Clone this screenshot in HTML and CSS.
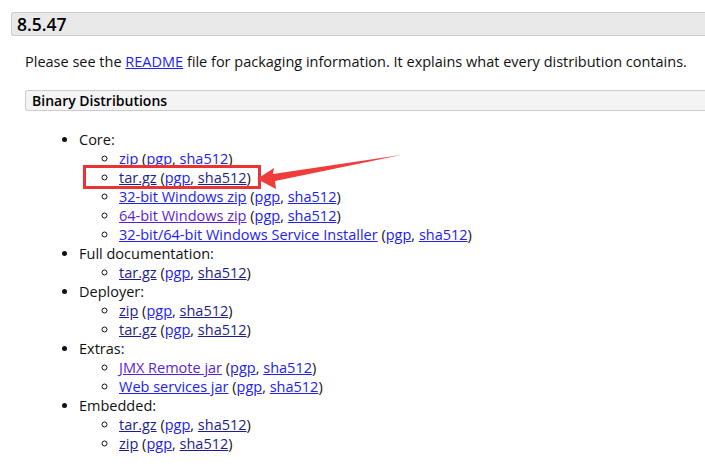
FILE: index.html
```html
<!DOCTYPE html>
<html>
<head>
<meta charset="utf-8">
<link rel="stylesheet" href="styles.css">
</head>
<body>
<div class="page">
  <h3 class="version">8.5.47</h3>
  <div class="section">
    <p class="intro">Please see the <a href="#" class="link">README</a> file for packaging information. It explains what every distribution contains.</p>
    <h4 class="subhead">Binary Distributions</h4>
    <ul class="dists">
      <li>Core:
        <ul class="files">
          <li><a class="link" href="#">zip</a> (<a class="link" href="#">pgp</a>, <a class="link" href="#">sha512</a>)</li>
          <li><a class="link dark" href="#">tar.gz</a> (<a class="link" href="#">pgp</a>, <a class="link dark" href="#">sha512</a>)</li>
          <li><a class="link" href="#">32-bit Windows zip</a> (<a class="link" href="#">pgp</a>, <a class="link" href="#">sha512</a>)</li>
          <li><a class="link purple" href="#">64-bit Windows zip</a> (<a class="link" href="#">pgp</a>, <a class="link" href="#">sha512</a>)</li>
          <li><a class="link" href="#">32-bit/64-bit Windows Service Installer</a> (<a class="link" href="#">pgp</a>, <a class="link" href="#">sha512</a>)</li>
        </ul>
      </li>
      <li>Full documentation:
        <ul class="files">
          <li><a class="link dark" href="#">tar.gz</a> (<a class="link" href="#">pgp</a>, <a class="link dark" href="#">sha512</a>)</li>
        </ul>
      </li>
      <li>Deployer:
        <ul class="files">
          <li><a class="link dark" href="#">zip</a> (<a class="link" href="#">pgp</a>, <a class="link dark" href="#">sha512</a>)</li>
          <li><a class="link dark" href="#">tar.gz</a> (<a class="link" href="#">pgp</a>, <a class="link dark" href="#">sha512</a>)</li>
        </ul>
      </li>
      <li>Extras:
        <ul class="files">
          <li><a class="link purple" href="#">JMX Remote jar</a> (<a class="link" href="#">pgp</a>, <a class="link" href="#">sha512</a>)</li>
          <li><a class="link" href="#">Web services jar</a> (<a class="link" href="#">pgp</a>, <a class="link" href="#">sha512</a>)</li>
        </ul>
      </li>
      <li>Embedded:
        <ul class="files">
          <li><a class="link dark" href="#">tar.gz</a> (<a class="link" href="#">pgp</a>, <a class="link dark" href="#">sha512</a>)</li>
          <li><a class="link dark" href="#">zip</a> (<a class="link" href="#">pgp</a>, <a class="link dark" href="#">sha512</a>)</li>
        </ul>
      </li>
    </ul>
  </div>
  <svg class="annotation" width="705" height="472" viewBox="0 0 705 472">
    <rect x="84.5" y="166.5" width="175" height="21" fill="none" stroke="#ea3434" stroke-width="3"/>
    <polygon points="257,179 274,168 273,174 401,155 275,181 276,189" fill="#f03c3c"/>
  </svg>
</div>
</body>
</html>
```
FILE: styles.css
```css
html, body {
  margin: 0;
  padding: 0;
  background: #fff;
}
.page {
  position: relative;
  width: 705px;
  height: 472px;
  overflow: hidden;
  font-family: "Open Sans", "Noto Sans", sans-serif;
  font-size: 14.5px;
  color: #111111;
  padding-left: 11px;
  box-sizing: border-box;
}
.version {
  margin: 12px 0 0 0;
  height: 22px;
  line-height: 22px;
  background: #e9e9e9;
  border: 1px solid #cccccc;
  border-right: none;
  border-radius: 3px 0 0 3px;
  padding-left: 5px;
  font-size: 17.5px;
  font-weight: 600;
  color: #000;
  width: 720px;
}
.section {
  padding-left: 14px;
}
.intro {
  margin: 16px 0 0 0;
  line-height: 20px;
}
.link {
  color: #2222ee;
  text-decoration: underline;
}
.link.dark {
  color: #1d1d8e;
}
.link.purple {
  color: #5b1ed6;
}
.subhead {
  margin: 18px 0 0 0;
  height: 19px;
  line-height: 19px;
  background: #f4f4f4;
  border: 1px solid #cccccc;
  border-right: none;
  border-radius: 3px 0 0 3px;
  padding-left: 6px;
  font-size: 14px;
  font-weight: 600;
  color: #000;
  width: 720px;
}
.dists {
  margin: 19px 0 0 0;
  padding-left: 54px;
  list-style: disc;
  line-height: 19px;
}
.files {
  margin: 0;
  padding-left: 40px;
  list-style: circle;
}
.annotation {
  position: absolute;
  left: 0;
  top: 0;
  pointer-events: none;
}
```
